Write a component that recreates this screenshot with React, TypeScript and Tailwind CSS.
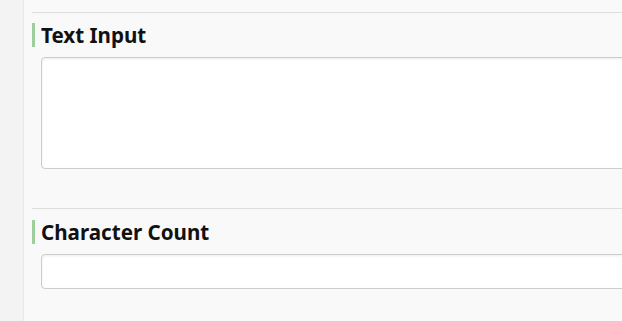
import React from "react";

function Heading({ title }: { title: string }) {
    return (
        <div className="flex items-center h-[24px] border-l-[3px] border-[#9ccf9c] pl-[6px]">
            <h2 className="text-[20.6px] font-bold leading-none text-[#111]">{title}</h2>
        </div>
    );
}

export default function App() {
    return (
        <div
            className="flex w-[622px] h-[321px] overflow-hidden bg-[#f9f9f9]"
            style={{ fontFamily: '"Noto Sans", "Noto Sans CJK JP", sans-serif' }}
        >
            <div className="w-[24px] shrink-0 bg-[#f3f3f3] border-r border-[#e8e8e8]" />
            <div className="flex-1 pl-[8px] pt-[12px]">
                <section className="border-t border-[#dedede] pt-[10px]">
                    <Heading title="Text Input" />
                    <div className="pl-[9px] mt-[10px]">
                        <textarea className="block w-[600px] h-[112px] bg-white border border-[#cccccc] rounded-[4px] shadow-[inset_0_1px_3px_rgba(0,0,0,0.08)] resize-none outline-none" />
                    </div>
                </section>
                <section className="border-t border-[#dedede] pt-[11px] mt-[39px]">
                    <Heading title="Character Count" />
                    <div className="pl-[9px] mt-[10px]">
                        <input
                            type="text"
                            className="block w-[600px] h-[35px] bg-white border border-[#cccccc] rounded-[4px] shadow-[inset_0_1px_3px_rgba(0,0,0,0.08)] outline-none"
                        />
                    </div>
                </section>
            </div>
        </div>
    );
}
